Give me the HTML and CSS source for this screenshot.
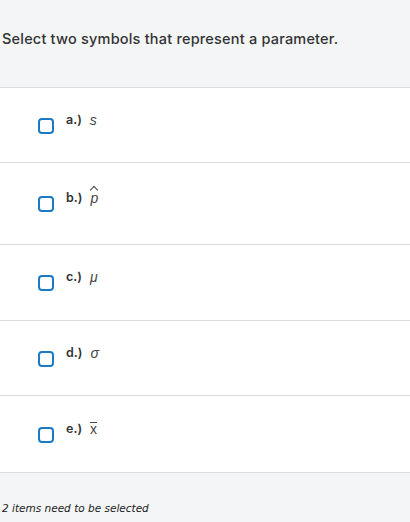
FILE: index.html
```html
<!DOCTYPE html>
<html lang="en">
<head>
    <meta charset="UTF-8">
    <title>Question</title>
    <link rel="stylesheet" href="styles.css">
</head>
<body>
    <div class="prompt">Select two symbols that represent a parameter.</div>
    <ul class="choices">
        <li class="choice">
            <span class="box"></span>
            <span class="label">a.)</span>
            <span class="sym">s</span>
        </li>
        <li class="choice tall">
            <span class="box"></span>
            <span class="label">b.)</span>
            <span class="sym hat">p</span>
        </li>
        <li class="choice c">
            <span class="box"></span>
            <span class="label">c.)</span>
            <span class="sym">&mu;</span>
        </li>
        <li class="choice">
            <span class="box"></span>
            <span class="label">d.)</span>
            <span class="sym">&sigma;</span>
        </li>
        <li class="choice e">
            <span class="box"></span>
            <span class="label">e.)</span>
            <span class="sym bar">x</span>
        </li>
    </ul>
    <div class="footer">2 items need to be selected</div>
</body>
</html>
```

FILE: styles.css
```css
/* question card */
body {
    margin: 0;
    font-family: Inter, "Open Sans", Arial, sans-serif;
    color: #333;
    background: #fff;
}
.prompt {
    background-color: #f4f5f7;
    border-bottom: 1px solid #dcdcdc;
    height: 88px;
    box-sizing: border-box;
    padding: 30px 0 0 2px;
    font-size: 14.5px;
    font-weight: 500;
    letter-spacing: 0.2px;
}
.choices {
    list-style: none;
    margin: 0;
    padding: 0;
}
.choice {
    display: flex;
    align-items: flex-start;
    height: 75px;
    box-sizing: border-box;
    padding: 24px 0 0 38px;
    border-bottom: 1px solid #dcdcdc;
}
.choice.tall {
    height: 82px;
    padding-top: 27px;
}
.choice.c {
    height: 76px;
}
.choice.e {
    height: 77px;
    padding-top: 25px;
}
.box {
    width: 16px;
    height: 16px;
    box-sizing: border-box;
    border: 2.5px solid #1a7bc4;
    border-radius: 4px;
    margin-top: 6px;
    margin-right: 12px;
}
.label {
    font-size: 12.5px;
    font-weight: 600;
    line-height: 16px;
}
.sym {
    font-family: "Liberation Sans", Arial, sans-serif;
    font-style: italic;
    font-size: 14px;
    line-height: 16px;
    margin-left: 8px;
    color: #444;
    position: relative;
}
.sym.hat::before {
    content: "";
    position: absolute;
    left: 1px;
    top: -3px;
    width: 5px;
    height: 5px;
    border-left: 1px solid #444;
    border-top: 1px solid #444;
    transform: rotate(45deg);
}
.sym.bar {
    font-style: normal;
    border-top: 1px solid #444;
    line-height: 13px;
    margin-top: 1px;
}
.footer {
    background-color: #f4f5f7;
    height: 50px;
    box-sizing: border-box;
    padding: 29px 0 0 2px;
    font-family: "DejaVu Sans", sans-serif;
    font-size: 10.5px;
    font-style: italic;
    color: #222;
}
```
